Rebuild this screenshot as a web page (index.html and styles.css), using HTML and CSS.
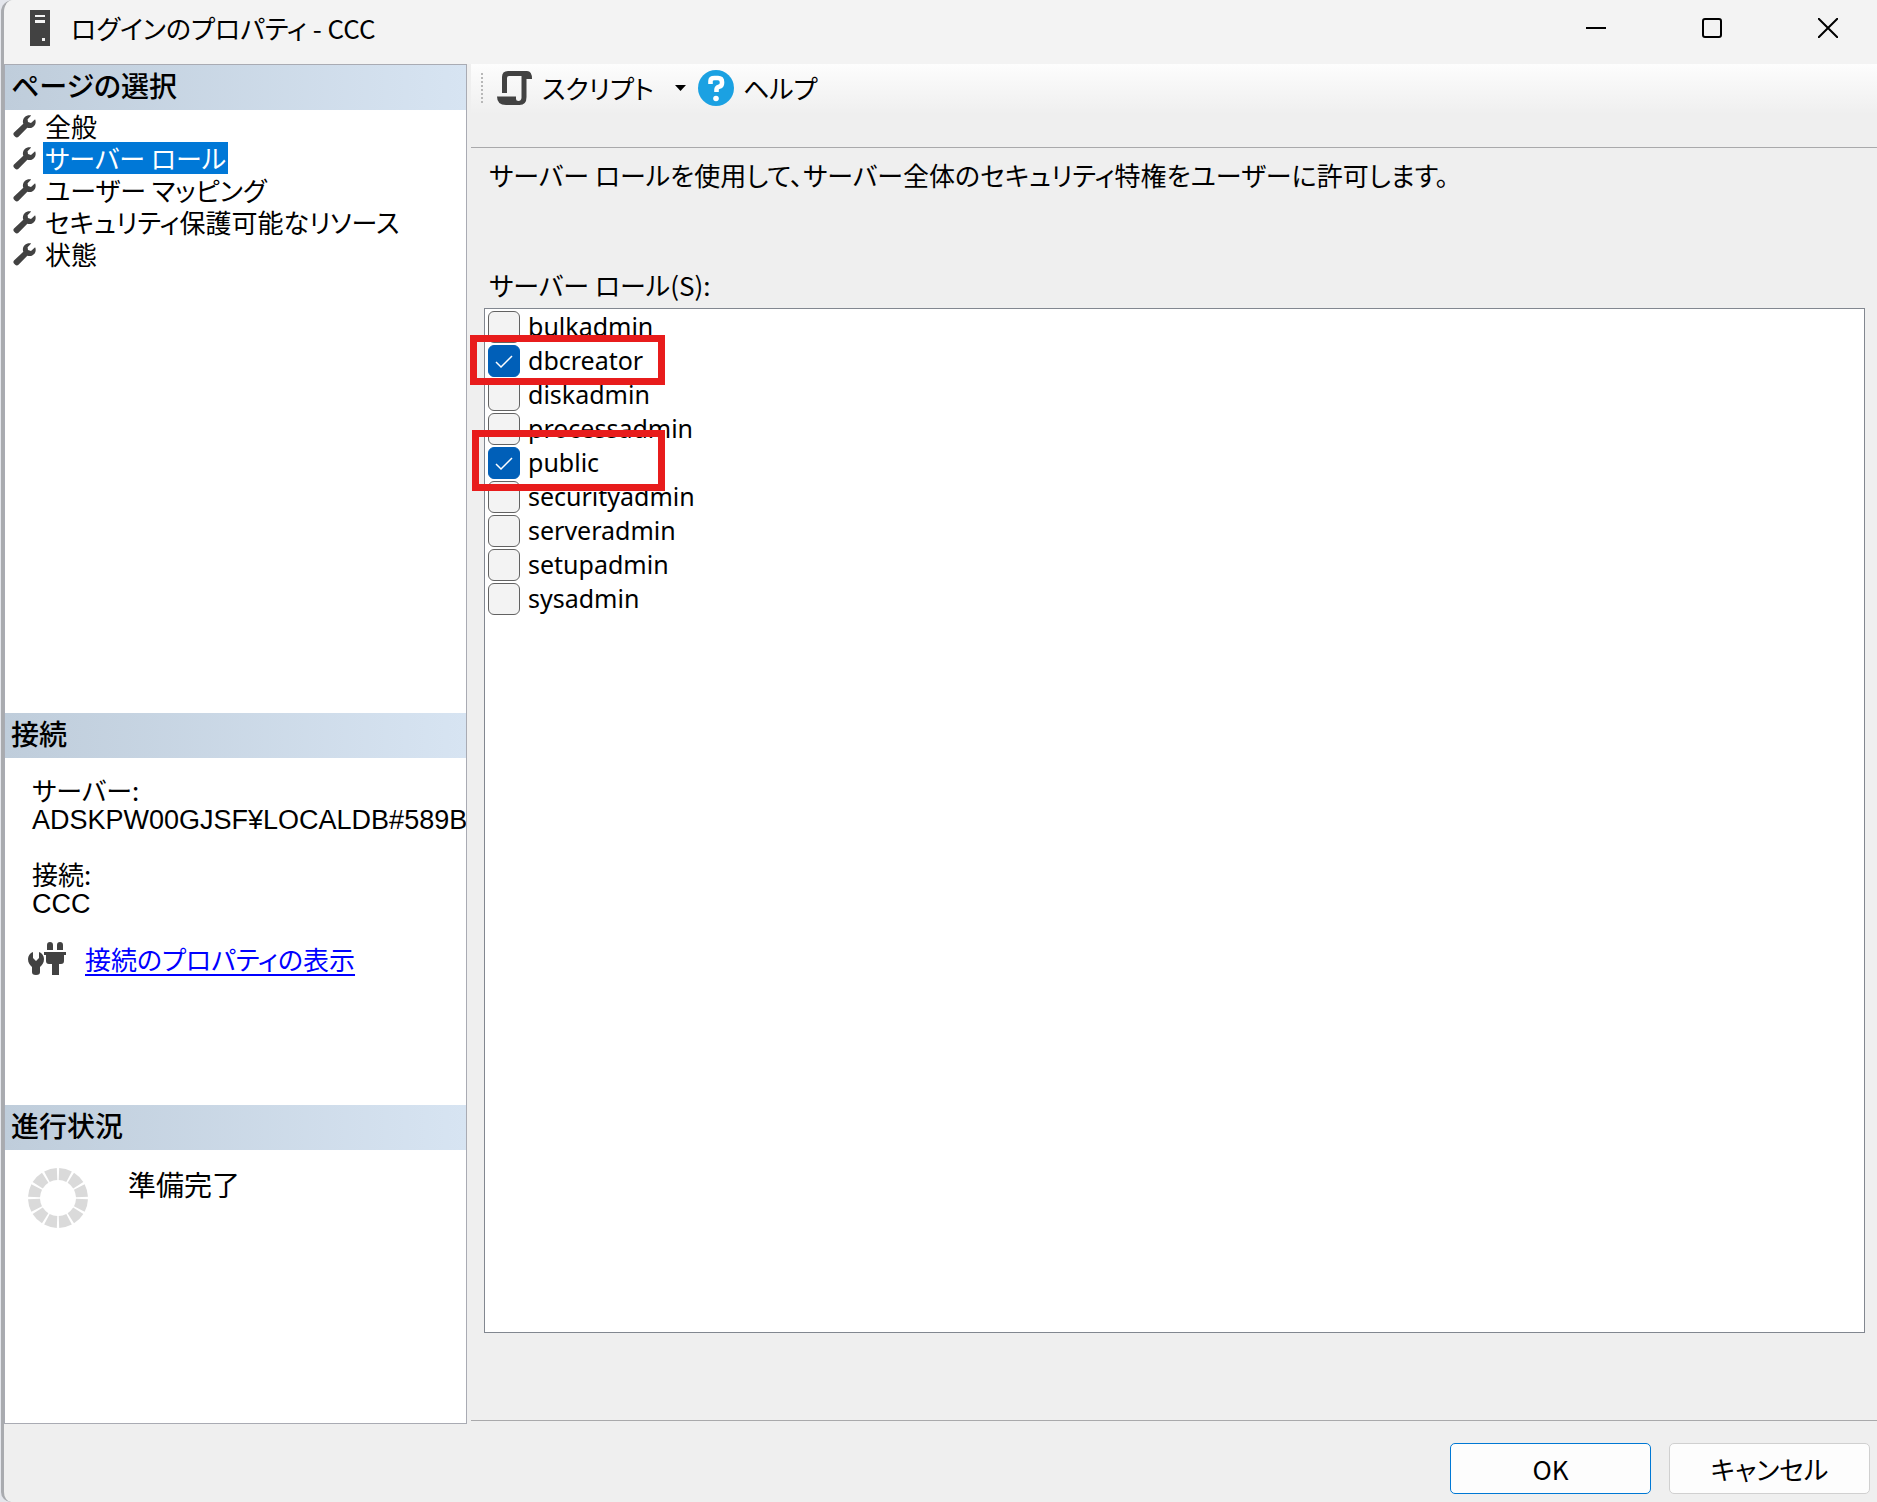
FILE: index.html
```html
<!DOCTYPE html>
<html lang="ja">
<head>
<meta charset="utf-8">
<meta name="viewport" content="width=device-width, initial-scale=1">
<title>ログインのプロパティ - CCC</title>
<link rel="stylesheet" href="styles.css">
</head>
<body>
<svg class="defs" width="0" height="0" aria-hidden="true">
  <symbol id="wrench" viewBox="0 0 24 24">
    <path transform="translate(24 0) scale(-1 1)" d="M23 18.600l-9.300-8.900c.9-2.300.4-4.800-1.500-6.700-1.700-1.700-4.300-2.200-6.400-1.600L9.400 5.200 9 8 6 9 1.900 5.200C.8 7.600 1.200 10.400 3.100 12.300c1.900 1.900 4.400 2.200 6.600 1.400l8.800 9.100c1 .9 2.300.9 3.300 0l1-1c1-1 1.100-2.300.2-3.200z"/>
  </symbol>
</svg>
<div class="window">
  <header class="titlebar">
    <svg class="server-icon" viewBox="0 0 20 36" aria-hidden="true"><path fill="#424242" d="M0 0h20v36H0z"/><path fill="#f3f3f3" d="M5 5h10v2H5zM5 10h10v3H5zM12 28h3v3h-3z"/></svg>
    <h1 class="title">ログインのプロパティ - CCC</h1>
    <div class="window-controls">
      <button class="control" aria-label="最小化"><svg viewBox="0 0 20 20"><path d="M0 10h20" stroke-width="2"/></svg></button>
      <button class="control" aria-label="最大化"><svg viewBox="0 0 20 20"><rect x="1" y="1" width="18" height="18" rx="2" stroke-width="2"/></svg></button>
      <button class="control" aria-label="閉じる"><svg viewBox="0 0 20 20"><path d="M0 0l20 20M20 0L0 20" stroke-width="2"/></svg></button>
    </div>
  </header>

  <div class="body">
    <aside class="sidebar">
      <section>
        <h2 class="section-title">ページの選択</h2>
        <nav class="pages">
          <a class="page" href="#general"><svg class="wrench"><use href="#wrench"/></svg><span class="page-name">全般</span></a>
          <a class="page selected" href="#roles" aria-current="page"><svg class="wrench"><use href="#wrench"/></svg><span class="page-name">サーバー ロール</span></a>
          <a class="page" href="#mapping"><svg class="wrench"><use href="#wrench"/></svg><span class="page-name">ユーザー マッピング</span></a>
          <a class="page" href="#securables"><svg class="wrench"><use href="#wrench"/></svg><span class="page-name">セキュリティ保護可能なリソース</span></a>
          <a class="page" href="#status"><svg class="wrench"><use href="#wrench"/></svg><span class="page-name">状態</span></a>
        </nav>
      </section>
      <section>
        <h2 class="section-title">接続</h2>
        <dl class="connection">
          <dt>サーバー:</dt>
          <dd>ADSKPW00GJSF¥LOCALDB#589B</dd>
          <dt>接続:</dt>
          <dd>CCC</dd>
        </dl>
        <div class="connection-link">
          <svg class="plug-icon" viewBox="0 0 38 34" fill="#424242" aria-hidden="true"><path d="M0 17c0-3 2-6 5-7v6l3 3 3-3v-6c3 1 5 4 5 7 0 4-2 6-4 8v5c0 2-1 3-4 3s-4-1-4-3v-5c-2-2-4-4-4-8z"/><path d="M19 8V3c0-2 1-3 3-3s3 1 3 3v5zM29 8V3c0-2 1-3 3-3s3 1 3 3v5zM16 10h22v3h-2v6c0 2-1 3-3 3h-2v11h-7V22h-3c-2 0-3-1-3-3v-6h-2z"/></svg>
          <a class="link" href="#connection">接続のプロパティの表示</a>
        </div>
      </section>
      <section>
        <h2 class="section-title">進行状況</h2>
        <div class="progress">
          <svg class="spinner" viewBox="0 0 60 60" aria-hidden="true"><circle cx="30" cy="30" r="24" fill="none" stroke="#dadada" stroke-width="12" pathLength="120" stroke-dasharray="8.400 1.600" stroke-dashoffset="-0.800"/></svg>
          <span>準備完了</span>
        </div>
      </section>
    </aside>

    <main class="content">
      <div class="toolbar">
        <span class="grip"></span>
        <button class="tool">
          <svg class="tool-icon" viewBox="0 0 36 36" aria-hidden="true"><path fill="#424242" fill-rule="evenodd" d="M5 23V7q0-6 6-6h19q5 0 5 8h-5.500v18q0 8-7 8H9q-9 0-9-8.500h19V29q0 2 2.500 2t3-3V6H12q-2 0-2 2v15z"/></svg>
          <span>スクリプト</span>
          <svg class="caret" viewBox="0 0 11 6" aria-hidden="true"><path d="M0 0h11L5.500 6z"/></svg>
        </button>
        <button class="tool">
          <svg class="tool-icon" viewBox="0 0 36 36" aria-hidden="true"><circle cx="18" cy="18" r="18" fill="#1ba1e2"/><path d="M12.500 14V11q0-3 4-3h3.500q4 0 4 4v1q0 3-3 3.800-2.500.7-2.500 3V22" fill="none" stroke="#fff" stroke-width="4.600"/><circle cx="18" cy="28.500" r="2.800" fill="#fff"/></svg>
          <span>ヘルプ</span>
        </button>
      </div>
      <div class="pane">
        <p class="description">サーバー ロールを使用して、サーバー全体のセキュリティ特権をユーザーに許可します。</p>
        <p class="list-label" id="roles-label">サーバー ロール(S):</p>
        <div class="listbox" role="group" aria-labelledby="roles-label">
          <label class="role"><input type="checkbox"><span>bulkadmin</span></label>
          <label class="role"><input type="checkbox" checked><span>dbcreator</span></label>
          <label class="role"><input type="checkbox"><span>diskadmin</span></label>
          <label class="role"><input type="checkbox"><span>processadmin</span></label>
          <label class="role"><input type="checkbox" checked><span>public</span></label>
          <label class="role"><input type="checkbox"><span>securityadmin</span></label>
          <label class="role"><input type="checkbox"><span>serveradmin</span></label>
          <label class="role"><input type="checkbox"><span>setupadmin</span></label>
          <label class="role"><input type="checkbox"><span>sysadmin</span></label>
          <span class="highlight highlight-dbcreator"></span>
          <span class="highlight highlight-public"></span>
        </div>
      </div>
    </main>
  </div>

  <footer class="footer">
    <button class="button default">OK</button>
    <button class="button">キャンセル</button>
  </footer>
</div>
</body>
</html>
```

FILE: styles.css
```css
* {
  box-sizing: border-box;
}

body {
  margin: 0;
  background: #e4e6ec;
  color: #000;
  font-family: "Noto Sans CJK JP", sans-serif;
  font-size: 26px;
  font-feature-settings: "palt";
  line-height: 32px;
}

h1, h2, p, dl, dd {
  margin: 0;
}

button {
  font: inherit;
  font-feature-settings: inherit;
  color: inherit;
}

.defs {
  position: absolute;
}

.window {
  display: flex;
  flex-direction: column;
  min-height: 100vh;
  margin-left: 1px;
  border-left: 3px solid #a9abaf;
  border-radius: 12px 0 0 10px;
  background: #efefef;
  overflow: hidden;
}

.titlebar {
  display: flex;
  align-items: center;
  height: 64px;
  padding: 0 0 8px 26px;
  background: #f3f3f3;
}

.server-icon {
  width: 20px;
  height: 36px;
  margin-right: 21px;
}

.title {
  flex: 1;
  font-size: 26px;
  font-weight: 400;
}

.window-controls {
  display: flex;
  gap: 18px;
}

.control {
  display: flex;
  align-items: center;
  justify-content: center;
  width: 98px;
  height: 56px;
  padding: 0;
  border: 0;
  background: none;
}

.control svg {
  width: 20px;
  height: 20px;
  fill: none;
  stroke: #000;
}

.body {
  display: flex;
  flex: 1;
  gap: 4px;
}

.sidebar {
  display: grid;
  grid-template-rows: 648fr 391fr 318fr;
  flex: none;
  width: 463px;
  border: 1px solid #a9abb3;
  background: #fff;
}

.sidebar section {
  min-width: 0;
  overflow: hidden;
}

.section-title {
  height: 45px;
  padding: 0 6px;
  background: linear-gradient(90deg, #bfcddb, #d7e4f2);
  font-size: 28px;
  font-weight: 500;
  line-height: 40px;
}

.pages {
  display: flex;
  flex-direction: column;
}

.page {
  display: flex;
  align-items: center;
  gap: 6px;
  height: 32px;
  padding-left: 8px;
  color: #000;
  text-decoration: none;
}

.wrench {
  width: 24px;
  height: 24px;
  fill: #424242;
}

.page-name {
  padding: 0 2px;
  white-space: nowrap;
}

.selected .page-name {
  background: #0078d7;
  color: #fff;
}

.connection {
  padding: 16px 0 0 27px;
  line-height: 31px;
  white-space: nowrap;
}

.connection dd {
  margin-bottom: 22px;
  font-family: "Liberation Sans", sans-serif;
  font-size: 27px;
}

.connection-link {
  display: flex;
  align-items: center;
  gap: 19px;
  padding-left: 23px;
}

.plug-icon {
  width: 38px;
  height: 34px;
}

.link {
  color: #00f;
  text-underline-offset: 4px;
  text-decoration-thickness: 2px;
}

.progress {
  display: flex;
  align-items: flex-start;
  gap: 40px;
  padding: 18px 0 0 23px;
  font-size: 28px;
}

.spinner {
  width: 60px;
  height: 60px;
}

.content {
  display: flex;
  flex: 1;
  flex-direction: column;
  min-width: 0;
  margin-bottom: 3px;
  border-bottom: 1px solid #a9a9ab;
}

.toolbar {
  display: flex;
  align-items: flex-start;
  height: 84px;
  padding: 6px 0 0 10px;
  border-bottom: 1px solid #a9a9ab;
  background: linear-gradient(#fdfdfd, #efefef 50px);
}

.grip {
  width: 2px;
  height: 32px;
  margin: 3px 14px 0 0;
  background: repeating-linear-gradient(#b8b8b8 0 2px, transparent 2px 4px);
}

.tool {
  display: flex;
  align-items: center;
  gap: 9px;
  height: 36px;
  padding: 0;
  border: 0;
  background: none;
}

.tool-icon {
  width: 36px;
  height: 36px;
}

.caret {
  width: 11px;
  height: 6px;
  margin: 0 12px;
}

.pane {
  display: flex;
  flex: 1;
  flex-direction: column;
  padding: 11px 12px 87px 13px;
}

.description {
  margin-bottom: 78px;
  padding-left: 5px;
}

.list-label {
  margin-bottom: 7px;
  padding-left: 5px;
}

.listbox {
  position: relative;
  flex: 1;
  padding: 1px 3px;
  border: 1px solid #828790;
  background: #fff;
}

.role {
  display: flex;
  align-items: center;
  gap: 8px;
  height: 34px;
  font-family: "Noto Sans", sans-serif;
  font-size: 25px;
}

.role span {
  padding-bottom: 2px;
}

.role input {
  appearance: none;
  width: 32px;
  height: 32px;
  margin: 0;
  border: 1px solid #626262;
  border-radius: 6px;
  background: #f3f3f3;
}

.role input:checked {
  border-color: #005fb8;
  background: #005fb8 url("data:image/svg+xml,%3Csvg xmlns='http://www.w3.org/2000/svg' viewBox='0 0 30 30'%3E%3Cpath d='M7 16l5 5L23 10' fill='none' stroke='white' stroke-width='1.500'/%3E%3C/svg%3E") center / 30px 30px;
}

.highlight {
  position: absolute;
  border: 7px solid #e81c1c;
  pointer-events: none;
}

.highlight-dbcreator {
  top: 26px;
  left: -15px;
  width: 195px;
  height: 50px;
}

.highlight-public {
  top: 121px;
  left: -13px;
  width: 193px;
  height: 61px;
}

.footer {
  display: flex;
  justify-content: flex-end;
  gap: 18px;
  padding: 19px 7px 8px;
}

.button {
  width: 201px;
  height: 51px;
  padding: 0;
  border: 1px solid #d0d0d0;
  border-radius: 5px;
  background: #fdfdfd;
}

.default {
  border-color: #0078d4;
}
```
